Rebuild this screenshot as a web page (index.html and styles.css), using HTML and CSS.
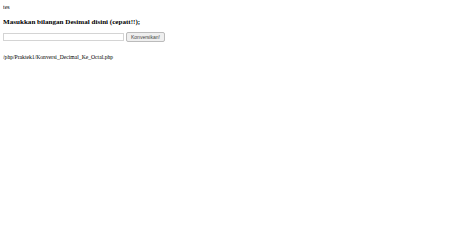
FILE: index.html
```html
<!DOCTYPE html>
<html lang="en">
<head>
    <meta charset="UTF-8">
    <title>Konversi Desimal ke Octal</title>
    <link rel="stylesheet" href="styles.css">
</head>
<body>
    <p class="intro">tes</p>

    <h3>Masukkan bilangan Desimal disini (cepatt!!);</h3>

    <form class="convert-form" action="Konversi_Decimal_Ke_Octal.php" method="post">
        <input type="text" name="desimal">
        <button type="submit">Konversikan!</button>
    </form>

    <p class="path">/php/Praktek1/Konversi_Decimal_Ke_Octal.php</p>
</body>
</html>
```

FILE: styles.css
```css
body {
    margin: 3px;
    font-family: "Liberation Serif", "Times New Roman", serif;
    font-size: 6px;
    color: #000;
    background-color: #fff;
}

.intro {
    margin: 1px 0 0;
}

h3 {
    font-size: 7.1px;
    margin: 8px 0 0;
}

.convert-form {
    display: flex;
    align-items: center;
    gap: 2px;
    margin-top: 6px;
}

.convert-form input {
    width: 117px;
    height: 4px;
    padding: 1px;
    border: 1px solid #d4d4d4;
    font-size: 6px;
}

.convert-form button {
    font-family: "Liberation Sans", Arial, sans-serif;
    font-size: 5px;
    color: #444;
    padding: 1px 4px;
    background-color: #efefef;
    border: 1px solid #bbb;
    border-radius: 2px;
}

.path {
    margin: 12px 0 0;
    font-size: 5.65px;
}
```
